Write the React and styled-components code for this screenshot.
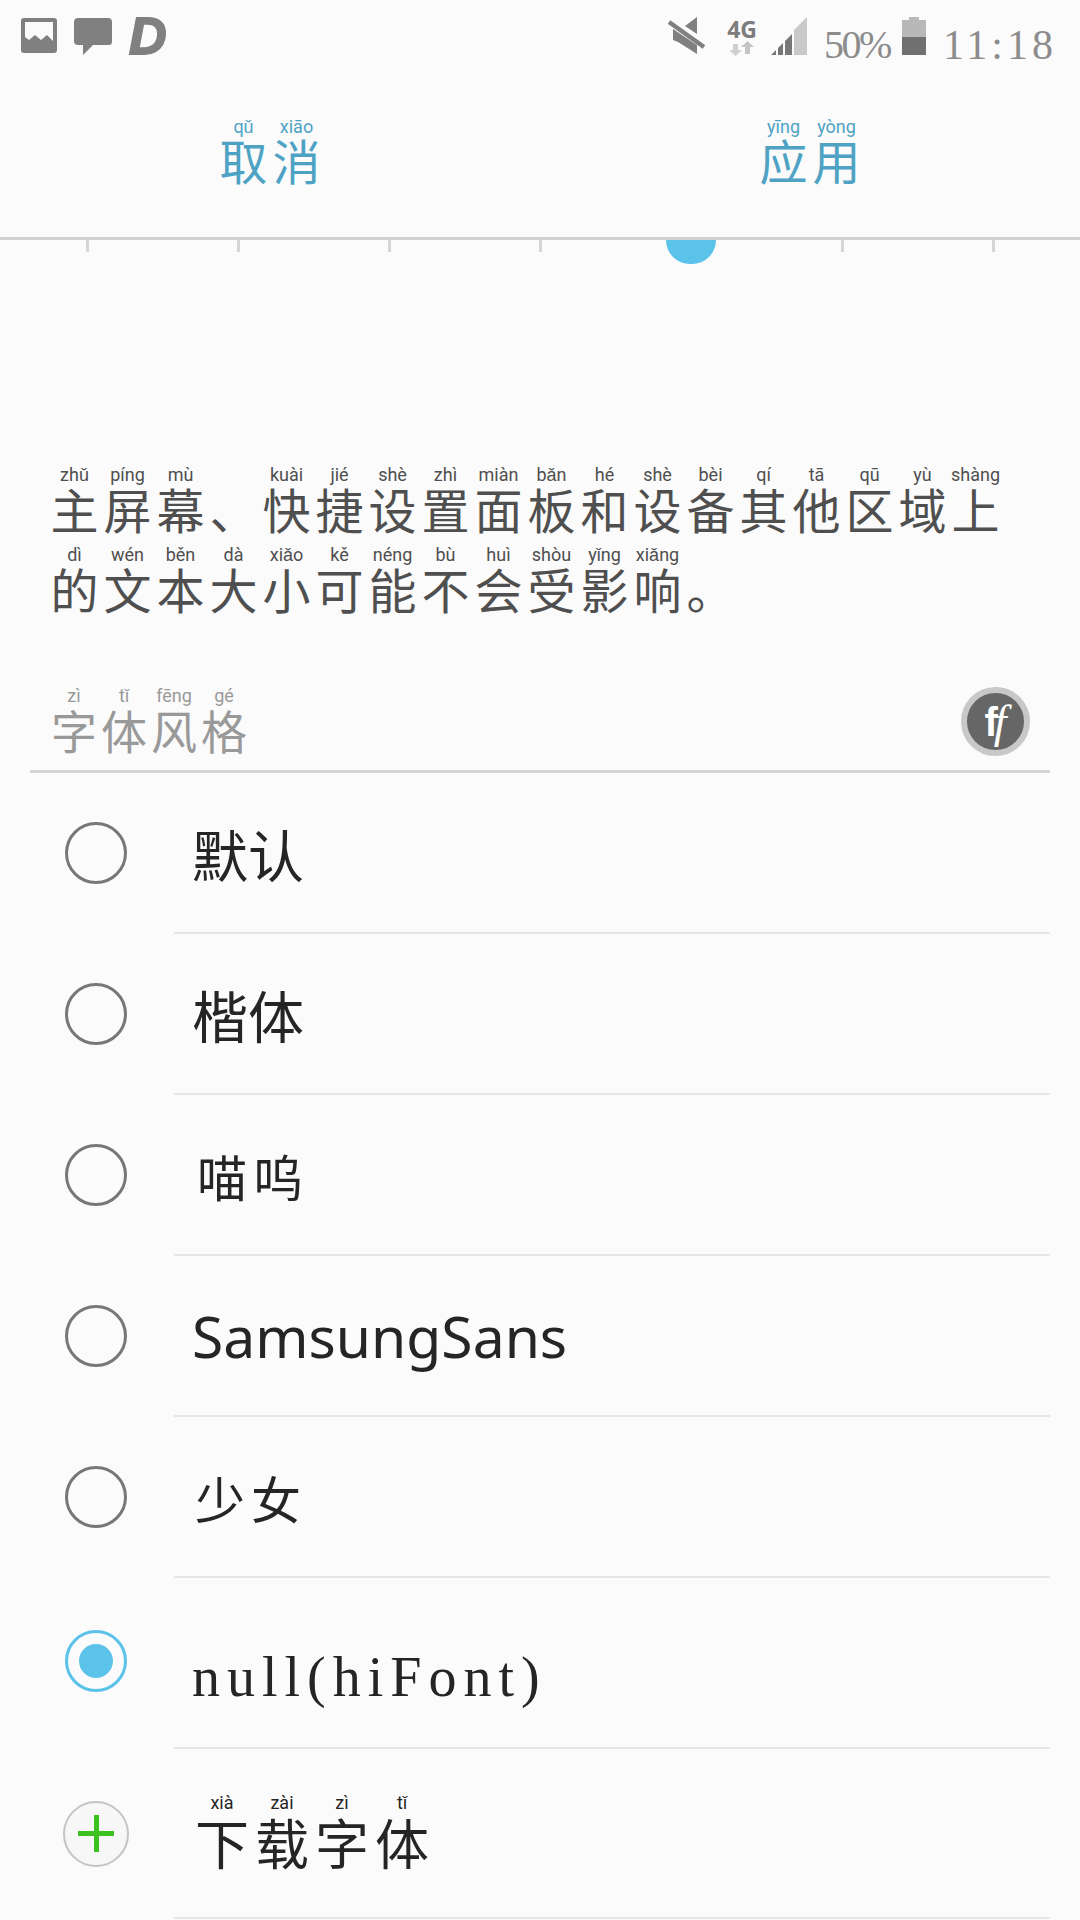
import styled, { createGlobalStyle } from 'styled-components';

const GlobalStyle = createGlobalStyle`
 html, body {
  margin: 0;
  padding: 0;
  background: #fbfbfb;
 }
`;

const cjk = `"Noto Sans CJK SC", "Noto Sans", sans-serif`;
const serif = `"Liberation Serif", serif`;

const Page = styled.div`
 width: 1080px;
 height: 1920px;
 overflow: hidden;
 background: #fbfbfb;
 font-family: ${cjk};
`;

const StatusBar = styled.div`
 height: 72px;
 display: flex;
 justify-content: space-between;
 align-items: flex-start;
 padding: 17px 23px 0 21px;
 box-sizing: border-box;
 color: #808080;
`;

const StatusGroup = styled.div`
 display: flex;
 align-items: flex-start;
`;

const LogoD = styled.span`
 margin-left: 17px;
 width: 38px;
 height: 38px;
 font-family: "Liberation Sans", sans-serif;
 font-size: 52px;
 line-height: 38px;
 font-weight: 700;
 font-style: italic;
 color: #808080;
 -webkit-text-stroke: 2px #808080;
`;

const NetBlock = styled.div`
 width: 30px;
 margin-left: 22px;
 display: flex;
 flex-direction: column;
 align-items: center;
`;

const NetLabel = styled.span`
 font-family: "Noto Sans", sans-serif;
 font-size: 23px;
 line-height: 24px;
 font-weight: 700;
 color: #7c7c7c;
`;

const Percent = styled.span`
 margin-left: 17px;
 margin-top: 3px;
 font-family: ${serif};
 font-size: 40px;
 line-height: 50px;
 letter-spacing: -2.5px;
 color: #8c8c8c;
`;

const Clock = styled.span`
 margin-left: 17px;
 margin-top: 3px;
 font-family: ${serif};
 font-size: 42px;
 line-height: 50px;
 letter-spacing: 4px;
 color: #8c8c8c;
`;

const ActionBar = styled.div`
 height: 121px;
 display: flex;
 border-bottom: 3px solid #d2d2d2;
 padding-top: 44px;
`;

const ActionCell = styled.div`
 flex: 1;
 display: flex;
 justify-content: center;
 color: #4ea3c4;
`;

const Word = styled.div`
 display: flex;
 flex-wrap: wrap;
`;

const GlyphBox = styled.div`
 width: ${(p) => p.$w}px;
 display: flex;
 flex-direction: column;
 align-items: center;
`;

const Pinyin = styled.span`
 height: ${(p) => p.$ph}px;
 font-family: Roboto, sans-serif;
 font-size: 18px;
 line-height: ${(p) => p.$ph}px;
 white-space: nowrap;
`;

const Han = styled.span`
 height: ${(p) => p.$ch}px;
 margin-bottom: ${(p) => p.$pb}px;
 font-size: ${(p) => p.$size}px;
 line-height: ${(p) => p.$ch}px;
 white-space: nowrap;
`;

const Ruler = styled.div`
 position: relative;
 height: 12px;
 display: flex;
 padding-left: 86px;
`;

const Tick = styled.div`
 width: 151px;
 flex: none;
 box-sizing: border-box;
 border-left: 3px solid ${(p) => (p.$hidden ? 'transparent' : '#d6d6d6')};
`;

const Knob = styled.div`
 position: absolute;
 left: 666px;
 top: 0;
 width: 50px;
 height: 24px;
 border-radius: 0 0 25px 25px;
 background: #5bc3e9;
`;

const Preview = styled.div`
 padding: 211px 0 0 48px;
 color: #4f4f4f;
`;

const FontHeader = styled.div`
 margin: 62px 30px 0;
 padding-left: 19px;
 height: 85px;
 display: flex;
 justify-content: space-between;
 align-items: flex-start;
 border-bottom: 3px solid #d6d6d6;
 color: #999999;
`;

const Badge = styled.div`
 width: 69px;
 height: 69px;
 margin: 2px 20px 0 0;
 border-radius: 50%;
 box-sizing: border-box;
 border: 6px solid #c8c8c8;
 background: #666666;
 color: #ffffff;
 display: flex;
 justify-content: center;
 align-items: center;
 font-size: 46px;
 line-height: 50px;
 font-family: ${serif};
`;

const BadgeBold = styled.span`
 font-family: "Liberation Sans", sans-serif;
 font-weight: 700;
 font-size: 40px;
`;

const BadgeItalic = styled.span`
 font-style: italic;
 margin-left: -4px;
`;

const List = styled.div`
 padding-right: 30px;
 color: #252525;
`;

const Row = styled.div`
 height: ${(p) => p.$h}px;
 display: flex;
`;

const RadioCell = styled.div`
 width: 174px;
 flex: none;
 display: flex;
 align-items: center;
 justify-content: center;
 padding-left: 18px;
 box-sizing: border-box;
`;

const Radio = styled.div`
 width: 62px;
 height: 62px;
 margin-bottom: ${(p) => (p.$on ? 5 : 2)}px;
 box-sizing: border-box;
 border-radius: 50%;
 border: 3px solid ${(p) => (p.$on ? '#5bc3e9' : '#777777')};
 display: flex;
 align-items: center;
 justify-content: center;

 &::after {
  content: '';
  display: ${(p) => (p.$on ? 'block' : 'none')};
  width: 34px;
  height: 34px;
  border-radius: 50%;
  background: #5bc3e9;
 }
`;

const AddButton = styled.div`
 width: 66px;
 height: 66px;
 box-sizing: border-box;
 border-radius: 50%;
 border: 2px solid #c4c4c4;
 background: #f7f7f7;
 position: relative;

 &::before,
 &::after {
  content: '';
  position: absolute;
  background: #3cc21e;
 }

 &::before {
  left: 13px;
  top: 28px;
  width: 36px;
  height: 5px;
 }

 &::after {
  left: 29px;
  top: 12px;
  width: 5px;
  height: 37px;
 }
`;

const RowBody = styled.div`
 flex: 1;
 display: flex;
 align-items: center;
 padding-left: 18px;
 border-bottom: 2px solid #e6e6e6;
`;

const Label = styled.span`
 font-family: ${(p) => p.$font || cjk};
 font-size: ${(p) => p.$size || 56}px;
 letter-spacing: ${(p) => p.$spacing || 0}px;
 margin-left: ${(p) => p.$indent || 0}px;
 margin-top: ${(p) => p.$drop || 0}px;
 line-height: 70px;
`;

const Glyphs = ({ items, w, size, ph = 24, ch = 42, pb = 14 }) => (
 <Word>
  {items.map(([py, han], i) => (
   <GlyphBox key={i} $w={w}>
    <Pinyin $ph={ph}>{py}</Pinyin>
    <Han $ch={ch} $pb={pb} $size={size}>{han}</Han>
   </GlyphBox>
  ))}
 </Word>
);

const ImageIcon = () => (
 <svg width="36" height="36" viewBox="0 0 36 36">
  <rect x="0" y="1" width="36" height="35" rx="3" fill="#808080" />
  <path d="M4 5h28v19l-6-6-6 5-6-5-6 5-4-3z" fill="#fbfbfb" />
 </svg>
);

const ChatIcon = () => (
 <svg width="38" height="38" viewBox="0 0 38 38" style={{ marginLeft: 17 }}>
  <path d="M4 1h30a4 4 0 0 1 4 4v20a3 3 0 0 1-3 3H19l-10 10V28H4a4 4 0 0 1-4-4V5a4 4 0 0 1 4-4z" fill="#808080" />
 </svg>
);

const MuteIcon = () => (
 <svg width="37" height="38" viewBox="0 0 37 38">
  <path d="M29 0v17L17 9z" fill="#808080" />
  <path d="M5 12v11l5 2 19 12v-9z" fill="#808080" />
  <path d="M1 5L36 30" stroke="#808080" strokeWidth="4.500" />
 </svg>
);

const NetArrows = () => (
 <svg width="24" height="15" viewBox="0 0 24 15">
  <path d="M3 3h5v6h4l-6.500 6L-1 9h4z" fill="#d0d0d0" />
  <path d="M15 13h5V6h4l-6.500-6L11 6h4z" fill="#c4c4c4" />
 </svg>
);

const SignalIcon = () => (
 <svg width="36" height="38" viewBox="0 0 36 38" style={{ marginLeft: 14 }}>
  <path d="M36 0v38H23V13z" fill="#c9c9c9" />
  <path d="M0 38l5-5v5zM7 31l5-5v12H7zM14 24l7-7v21h-7z" fill="#777777" />
 </svg>
);

const BatteryIcon = () => (
 <svg width="24" height="38" viewBox="0 0 24 38" style={{ marginLeft: 12 }}>
  <path d="M7 0h10v3h7v17H0V3h7z" fill="#b8b8b8" />
  <rect x="0" y="20" width="24" height="18" fill="#707070" />
 </svg>
);

const line1 = [['zhǔ', '主'], ['píng', '屏'], ['mù', '幕'], ['', '、'], ['kuài', '快'], ['jié', '捷'], ['shè', '设'], ['zhì', '置'], ['miàn', '面'], ['bǎn', '板'], ['hé', '和'], ['shè', '设'], ['bèi', '备'], ['qí', '其'], ['tā', '他'], ['qū', '区'], ['yù', '域'], ['shàng', '上']];
const line2 = [['dì', '的'], ['wén', '文'], ['běn', '本'], ['dà', '大'], ['xiǎo', '小'], ['kě', '可'], ['néng', '能'], ['bù', '不'], ['huì', '会'], ['shòu', '受'], ['yǐng', '影'], ['xiǎng', '响'], ['', '。']];

const fonts = [
 { h: 161, label: '默认' },
 { h: 161, label: '楷体' },
 { h: 161, label: '喵呜', size: 50, spacing: 6, indent: 5 },
 { h: 161, label: 'SamsungSans', font: '"Noto Sans", sans-serif', size: 57 },
 { h: 161, label: '少女', size: 50, spacing: 6, indent: 3 },
 { h: 171, label: 'null(hiFont)', font: serif, size: 56, spacing: 7, drop: 28, on: true },
];

const App = () => {
 return (
  <Page lang='zh-CN'>
   <GlobalStyle />
   <StatusBar>
    <StatusGroup>
     <ImageIcon />
     <ChatIcon />
     <LogoD>D</LogoD>
    </StatusGroup>
    <StatusGroup>
     <MuteIcon />
     <NetBlock>
      <NetLabel>4G</NetLabel>
      <NetArrows />
     </NetBlock>
     <SignalIcon />
     <Percent>50%</Percent>
     <BatteryIcon />
     <Clock>11:18</Clock>
    </StatusGroup>
   </StatusBar>

   <ActionBar>
    <ActionCell>
     <Glyphs items={[['qǔ', '取'], ['xiāo', '消']]} w={53} size={48} ph={22} ch={42} pb={12} />
    </ActionCell>
    <ActionCell>
     <Glyphs items={[['yīng', '应'], ['yòng', '用']]} w={53} size={48} ph={22} ch={42} pb={12} />
    </ActionCell>
   </ActionBar>

   <Ruler>
    {[0, 1, 2, 3, 4, 5, 6].map((i) => (
     <Tick key={i} $hidden={i === 4} />
    ))}
    <Knob />
   </Ruler>

   <Preview>
    <Glyphs items={line1} w={53} size={48} />
    <Glyphs items={line2} w={53} size={48} />
   </Preview>

   <FontHeader>
    <Glyphs items={[['zì', '字'], ['tǐ', '体'], ['fēng', '风'], ['gé', '格']]} w={50} size={46} ph={22} ch={44} pb={6} />
    <Badge>
     <BadgeBold>f</BadgeBold>
     <BadgeItalic>f</BadgeItalic>
    </Badge>
   </FontHeader>

   <List>
    {fonts.map((f) => (
     <Row key={f.label} $h={f.h}>
      <RadioCell>
       <Radio $on={f.on} />
      </RadioCell>
      <RowBody>
       <Label $font={f.font} $size={f.size} $spacing={f.spacing} $indent={f.indent} $drop={f.drop}>{f.label}</Label>
      </RowBody>
     </Row>
    ))}
    <Row $h={170}>
     <RadioCell>
      <AddButton />
     </RadioCell>
     <RowBody>
      <Glyphs items={[['xià', '下'], ['zài', '载'], ['zì', '字'], ['tǐ', '体']]} w={60} size={54} ph={24} ch={54} pb={6} />
     </RowBody>
    </Row>
   </List>
  </Page>
 );
};

export default App;
